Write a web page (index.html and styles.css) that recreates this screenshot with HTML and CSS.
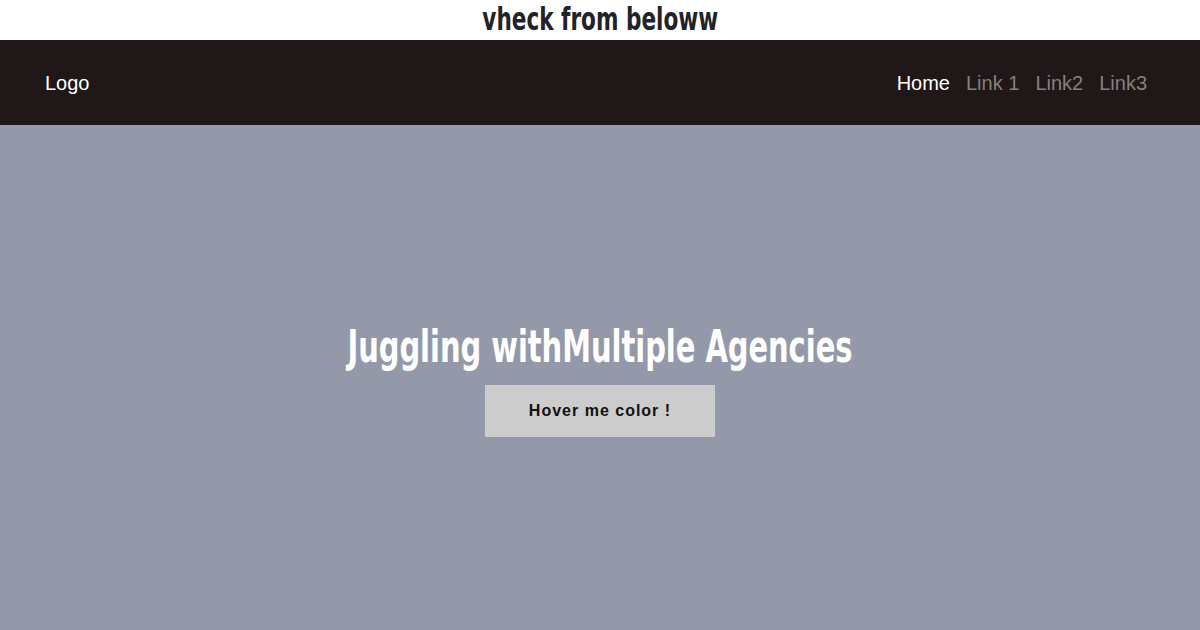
FILE: index.html
```html
<!DOCTYPE html>
<html lang="en">
<head>
    <meta charset="UTF-8">
    <meta name="viewport" content="width=device-width, initial-scale=1.0">
    <title>Hover</title>
    <link rel="stylesheet" href="styles.css">
</head>
<body>

<div class="top-bar">
    <h2 class="top-title">vheck from beloww</h2>
</div>

<nav class="navbar">
    <div class="logo">Logo</div>
    <ul class="nav-links">
        <li><a href="#" class="active">Home</a></li>
        <li><a href="#">Link 1</a></li>
        <li><a href="#">Link2</a></li>
        <li><a href="#">Link3</a></li>
    </ul>
</nav>

<section class="hero">
    <h1>Juggling withMultiple Agencies</h1>
    <button class="hover-btn">Hover me color !</button>
</section>

</body>
</html>
```

FILE: styles.css
```css
* {
    box-sizing: border-box;
}
html, body {
    height: 100%;
}
body {
    margin: 0;
    font-family: 'Liberation Sans', Arial, sans-serif;
    display: flex;
    flex-direction: column;
    background-color: #ffffff;
}
.top-bar {
    height: 40px;
    display: flex;
    justify-content: center;
}
.top-title {
    margin: 0;
    line-height: 38px;
    font-family: 'DejaVu Sans Condensed', 'DejaVu Sans', sans-serif;
    font-stretch: condensed;
    font-weight: bold;
    font-size: 32px;
    color: #222228;
    transform: scaleX(0.75);
}
.navbar {
    background-color: #201718;
    height: 85px;
    display: flex;
    align-items: center;
    justify-content: space-between;
    padding: 2px 53px 0 45px;
}
.logo {
    color: #ffffff;
    font-size: 20px;
}
.nav-links {
    list-style: none;
    margin: 0;
    padding: 0;
    display: flex;
    gap: 16px;
}
.nav-links a {
    color: #85807f;
    text-decoration: none;
    font-size: 20px;
}
.nav-links a.active {
    color: #ffffff;
}
.hero {
    flex: 1;
    background-color: #9399a9;
    display: flex;
    flex-direction: column;
    align-items: center;
    justify-content: center;
    padding-top: 9px;
}
.hero h1 {
    margin: 0 0 18px;
    line-height: 40px;
    color: #ffffff;
    font-family: 'DejaVu Sans Condensed', 'DejaVu Sans', sans-serif;
    font-stretch: condensed;
    font-weight: bold;
    font-size: 44px;
    transform: scaleX(0.73);
}
.hover-btn {
    width: 230px;
    height: 52px;
    border: none;
    background-color: #cccccc;
    font-family: 'Liberation Sans', Arial, sans-serif;
    font-weight: bold;
    font-size: 16px;
    letter-spacing: 1px;
    color: #111111;
    cursor: pointer;
    transition: background-color 0.3s;
}
.hover-btn:hover {
    background-color: #ff6f61;
}
```
